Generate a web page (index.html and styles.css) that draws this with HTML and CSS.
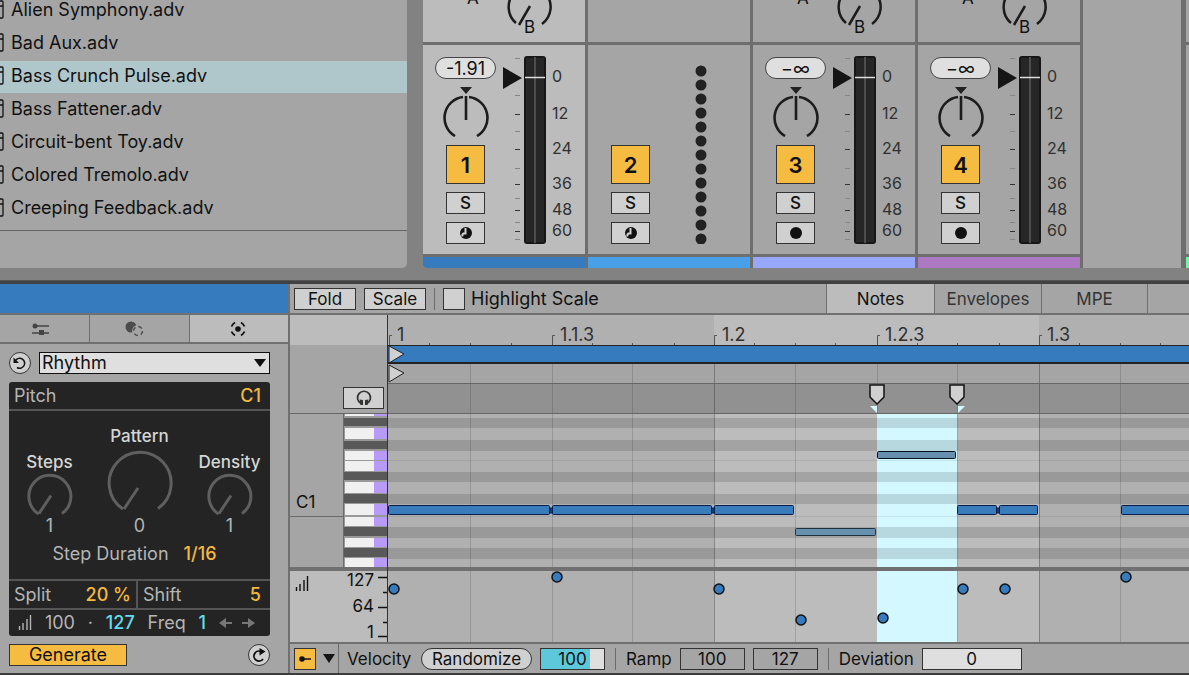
FILE: index.html
```html
<!DOCTYPE html>
<html lang="en">
<head>
  <meta charset="UTF-8" />
  <meta name="viewport" content="width=device-width, initial-scale=1.0"/>
  <title>Live Set</title>
  <link rel="stylesheet" href="styles.css">
</head>
<body>

  <!-- Shared shapes -->
  <svg class="defs" width="0" height="0" aria-hidden="true">
    <defs>
      <symbol id="device" viewBox="0 0 4 20">
        <path d="M0 1H2Q3 1 3 2V17Q3 18 2 18H0M0 6H3" fill="none" stroke="#111" stroke-width="1.300"/>
      </symbol>
      <g id="send">
        <path d="M93 23A21 21 0 1 1 119 24M107 6L96 25" fill="none" stroke="#1c1c1c" stroke-width="2.500"/>
        <text x="44" y="4">A</text>
        <text x="101" y="33">B</text>
      </g>
      <symbol id="pan" viewBox="0 0 50 50">
        <path d="M19 0H31L25 7Z" fill="#222"/>
        <path d="M14 49A21 21 0 0 1 22 10M28 10A21 21 0 0 1 36 49M25 9V33" fill="none" stroke="#1c1c1c" stroke-width="2.600"/>
      </symbol>
      <g id="meter">
        <path d="M0 11V33L19 22Z" fill="#151515"/>
        <path d="M12 2.500H17M12 39.500H17M12 75.500H17M12 112.500H17M12 142.500H17M12 166.500H17M12 183.500H17" stroke="#858585"/>
        <path d="M12 58.500H17M12 93.500H17M12 128.500H17M12 154.500H17M12 175.500H17" stroke="#333"/>
        <rect x="21" y="0" width="22" height="188" rx="3" fill="#161616"/>
        <path d="M23 2H31V186H23ZM33 2H41V186H33Z" fill="#262626"/>
        <path d="M32 1V187" stroke="#606060" stroke-width="1.500"/>
        <path d="M22 21.500H42" stroke="#ddd" stroke-width="1.500"/>
        <g class="scale">
          <text x="49" y="26">0</text>
          <text x="49" y="63">12</text>
          <text x="49" y="98">24</text>
          <text x="49" y="133">36</text>
          <text x="49" y="159">48</text>
          <text x="49" y="180">60</text>
        </g>
      </g>
      <symbol id="note-arm" viewBox="0 0 14 14">
        <circle cx="7" cy="7" r="6" fill="#111"/>
        <path d="M6.500 2V7.500H4.500Q3 8 3.500 10.500" fill="none" stroke="#d0d0d0" stroke-width="2"/>
      </symbol>
      <symbol id="bars" viewBox="0 0 14 16">
        <path d="M1.500 15V11M5 15V8M9 15V4M12.500 15V0" stroke="currentColor" stroke-width="1.400"/>
      </symbol>
      <g id="locator">
        <path d="M-7 0H7V12L0 19L-7 12Z" fill="#d0d0d0" stroke="#111" stroke-width="1.500"/>
      </g>
    </defs>
  </svg>

  <!-- Browser and mixer -->
  <div class="top">
    <div class="browser">
      <ul class="files">
        <li><svg width="4" height="20"><use href="#device"/></svg>Alien Symphony.adv</li>
        <li><svg width="4" height="20"><use href="#device"/></svg>Bad Aux.adv</li>
        <li class="selected"><svg width="4" height="20"><use href="#device"/></svg>Bass Crunch Pulse.adv</li>
        <li><svg width="4" height="20"><use href="#device"/></svg>Bass Fattener.adv</li>
        <li><svg width="4" height="20"><use href="#device"/></svg>Circuit-bent Toy.adv</li>
        <li><svg width="4" height="20"><use href="#device"/></svg>Colored Tremolo.adv</li>
        <li><svg width="4" height="20"><use href="#device"/></svg>Creeping Feedback.adv</li>
      </ul>
      <div class="browser-footer"></div>
    </div>

    <div class="mixer">
      <div class="track current">
        <svg class="sends" width="162" height="42"><use href="#send"/></svg>
        <div class="strip">
          <div class="controls">
            <input class="volume" type="text" value="-1.91" aria-label="Track 1 volume">
            <svg class="pan" width="50" height="50"><use href="#pan"/></svg>
            <button class="activator">1</button>
            <button class="small">S</button>
            <button class="small" aria-label="Arm track 1"><svg width="14" height="14"><use href="#note-arm"/></svg></button>
          </div>
          <svg width="80" height="188"><use href="#meter"/></svg>
        </div>
        <div class="color blue"></div>
      </div>

      <div class="track">
        <svg class="sends" width="162" height="42"></svg>
        <div class="strip">
          <div class="controls">
            <button class="activator">2</button>
            <button class="small">S</button>
            <button class="small" aria-label="Arm track 2"><svg width="14" height="14"><use href="#note-arm"/></svg></button>
          </div>
          <svg width="80" height="188">
            <path d="M33 15V184" stroke="#222" stroke-width="11" stroke-linecap="round" stroke-dasharray="0 14"/>
          </svg>
        </div>
        <div class="color sky"></div>
      </div>

      <div class="track">
        <svg class="sends" width="162" height="42"><use href="#send"/></svg>
        <div class="strip">
          <div class="controls">
            <input class="volume" type="text" value="−∞" aria-label="Track 3 volume">
            <svg class="pan" width="50" height="50"><use href="#pan"/></svg>
            <button class="activator">3</button>
            <button class="small">S</button>
            <button class="small" aria-label="Arm track 3"><svg width="14" height="14"><circle cx="7" cy="7" r="6" fill="#111"/></svg></button>
          </div>
          <svg width="80" height="188"><use href="#meter"/></svg>
        </div>
        <div class="color violet"></div>
      </div>

      <div class="track">
        <svg class="sends" width="162" height="42"><use href="#send"/></svg>
        <div class="strip">
          <div class="controls">
            <input class="volume" type="text" value="−∞" aria-label="Track 4 volume">
            <svg class="pan" width="50" height="50"><use href="#pan"/></svg>
            <button class="activator">4</button>
            <button class="small">S</button>
            <button class="small" aria-label="Arm track 4"><svg width="14" height="14"><circle cx="7" cy="7" r="6" fill="#111"/></svg></button>
          </div>
          <svg width="80" height="188"><use href="#meter"/></svg>
        </div>
        <div class="color purple"></div>
      </div>

      <div class="drop-area"></div>

      <div class="track return">
        <div class="sends"></div>
        <div class="strip"></div>
        <div class="color green"></div>
      </div>
    </div>
  </div>

  <!-- Clip view -->
  <div class="clip-view">
    <div class="clip-panel">
      <div class="clip-title"></div>
      <div class="clip-tabs">
        <button aria-label="Clip settings">
          <svg width="18" height="14">
            <path d="M3 4H18M1 11H18" stroke="#444" stroke-width="1.500"/>
            <circle cx="4" cy="4" r="2.500" fill="#444"/>
            <rect x="8" y="8" width="5" height="5" fill="#444"/>
          </svg>
        </button>
        <button aria-label="Transform">
          <svg width="20" height="18">
            <circle cx="7" cy="7" r="5.500" fill="#4c4c4c"/>
            <circle cx="14" cy="11" r="6" fill="#a5a5a5"/>
            <circle cx="14" cy="11" r="4.500" fill="none" stroke="#4c4c4c" stroke-width="1.500" stroke-dasharray="4 3"/>
          </svg>
        </button>
        <button class="active" aria-label="Generate">
          <svg width="16" height="16">
            <circle cx="8" cy="8" r="2.800" fill="#111"/>
            <path d="M1.500 5.500Q2.500 3 5 1.500M11 1.500Q13.500 3 14.500 5.500M14.500 10.500Q13.500 13 11 14.500M5 14.500Q2.500 13 1.500 10.500" fill="none" stroke="#111" stroke-width="1.800"/>
          </svg>
        </button>
      </div>

      <div class="tools">
        <div class="row">
          <button class="round" aria-label="Reset">
            <svg width="16" height="16">
              <path d="M3.500 5.500A5 5 0 1 1 5 12.500" fill="none" stroke="#111" stroke-width="1.500"/>
              <path d="M1.500 2.500V8H7Z" fill="#111"/>
            </svg>
          </button>
          <div class="picker">
            <select aria-label="Generator"><option>Rhythm</option></select>
          </div>
        </div>

        <div class="display">
          <div class="line"><span>Pitch</span><b>C1</b></div>
          <div class="pattern">
            <div class="knobs">
              <div class="knob">
                <span>Steps</span>
                <svg width="48" height="46"><path d="M12.500 42A21 21 0 1 1 36 41.500M25 23.500L13 41.500"/></svg>
                <i>1</i>
              </div>
              <div class="knob">
                <span>Pattern</span>
                <svg width="66" height="72"><path d="M16 63A31 31 0 1 1 51 62.500M31 42L17 63"/></svg>
                <i>0</i>
              </div>
              <div class="knob">
                <span>Density</span>
                <svg width="48" height="46"><path d="M12.500 42A21 21 0 1 1 36 41.500M25 23.500L13 41.500"/></svg>
                <i>1</i>
              </div>
            </div>
            <div class="duration"><span>Step Duration</span><b>1/16</b></div>
          </div>
          <div class="split">
            <div class="line"><span>Split</span><b>20 %</b></div>
            <div class="line"><span>Shift</span><b>5</b></div>
          </div>
          <div class="accent">
            <svg width="14" height="16"><use href="#bars"/></svg>
            <span>100</span>
            <span class="dot">·</span>
            <b>127</b>
            <span>Freq</span>
            <b>1</b>
            <svg width="36" height="12">
              <path d="M13 6H3M23 6H33" stroke="#777" stroke-width="2"/>
              <path d="M0 6L7 1V11ZM36 6L29 1V11Z" fill="#777"/>
            </svg>
          </div>
        </div>

        <div class="row spread">
          <button class="generate">Generate</button>
          <button class="round" aria-label="Auto generate">
            <svg width="16" height="16">
              <path d="M12 12A5 5 0 1 1 10 4.500" fill="none" stroke="#111" stroke-width="1.800"/>
              <path d="M8.500 1L14.500 4.500L8.500 8.500Z" fill="#111"/>
            </svg>
          </button>
        </div>
      </div>
    </div>

    <div class="editor">
      <div class="toolbar">
        <button>Fold</button>
        <button>Scale</button>
        <span class="sep"></span>
        <label><input type="checkbox">Highlight Scale</label>
        <div class="editor-tabs">
          <button class="active">Notes</button>
          <button>Envelopes</button>
          <button>MPE</button>
          <span></span>
        </div>
      </div>

      <div class="roll">
        <div class="gutter">
          <div class="gutter-ruler"></div>
          <div class="gutter-scrub">
            <button aria-label="Preview">
              <svg width="16" height="16">
                <path d="M5 13.500A6.500 6.500 0 1 1 11 13.500" fill="none" stroke="#333" stroke-width="1.700"/>
                <path d="M3.500 9.500L7 10V15H4.500ZM12.500 9.500L9 10V15H11.500Z" fill="#333"/>
              </svg>
            </button>
          </div>
          <div class="gutter-keys">
            <svg width="98" height="153">
              <rect x="53" width="45" height="153" fill="#999"/>
              <path d="M55 0H84V2H55ZM55 14H84V25H55ZM55 37H84V46H55ZM55 47H84V57H55ZM55 68H84V79H55ZM55 90H84V101H55ZM55 103H84V112H55ZM55 124H84V133H55ZM55 144H84V153H55Z" fill="#f0f0f0"/>
              <path d="M84 0H98V2H84ZM84 14H98V25H84ZM84 37H98V46H84ZM84 47H98V57H84ZM84 68H98V79H84ZM84 90H98V101H84ZM84 103H98V112H84ZM84 124H98V133H84ZM84 144H98V153H84Z" fill="#b89bf8"/>
              <path d="M54 4H98V12H54ZM54 27H98V35H54ZM54 58H98V66H54ZM54 80H98V89H54ZM54 113H98V122H54ZM54 134H98V143H54Z" fill="#595959"/>
              <path d="M53.500 0V153M0 102.500H53" stroke="#6b6b6b"/>
              <text x="6" y="94">C1</text>
            </svg>
          </div>
          <div class="gutter-velocity">
            <svg width="98" height="71">
              <svg x="5" y="5" width="14" height="16"><use href="#bars"/></svg>
              <path d="M88 6.500H98M88 36.500H98M88 65.500H98M93 21.500H98M93 51.500H98" stroke="#111" stroke-width="1.500"/>
              <g text-anchor="end">
                <text x="84" y="15">127</text>
                <text x="84" y="41">64</text>
                <text x="84" y="67">1</text>
              </g>
            </svg>
          </div>
        </div>

        <!-- Note canvas: ruler, loop brace, markers, notes, velocities -->
        <svg class="canvas" height="327">
          <rect width="100%" height="327" fill="#b0b0b0"/>
          <rect x="326" width="325" height="327" fill="#bcbcbc"/>
          <rect y="30" width="100%" height="38" fill="#a5a5a5"/>
          <rect y="69" width="100%" height="30" fill="#919191"/>

          <rect x="489" y="99" width="80" height="228" fill="#d3f8ff"/>
          <path d="M482 91H489V98ZM570 91H577L570 98Z" fill="#d3f8ff"/>
          <g fill="#000" fill-opacity=".13">
            <rect y="103" width="100%" height="10"/>
            <rect y="125" width="100%" height="11"/>
            <rect y="157" width="100%" height="10"/>
            <rect y="179" width="100%" height="10"/>
            <rect y="212" width="100%" height="11"/>
            <rect y="233" width="100%" height="11"/>
          </g>
          <path d="M82.500 49V327M164.500 49V327M244.500 49V327M407.500 49V327M489.500 49V99M569.500 49V327M732.500 49V327" stroke="#000" stroke-opacity=".14"/>
          <path d="M326.500 49V327M651.500 49V327" stroke="#000" stroke-opacity=".28"/>
          <rect y="145" width="100%" height="1" fill="#000" fill-opacity=".08"/>
          <rect y="201" width="100%" height="1" fill="#000" fill-opacity=".08"/>

          <rect y="30" width="100%" height="19" fill="#222"/>
          <rect y="31" width="100%" height="16" fill="#367bbd"/>
          <rect y="68" width="100%" height="1" fill="#666"/>
          <rect y="98" width="100%" height="1" fill="#666"/>
          <rect y="252" width="100%" height="4" fill="#707070"/>

          <path d="M1.500 30V20.500H4M164.500 30V20.500H167M326.500 30V20.500H329M489.500 30V20.500H492M651.500 30V20.500H654M41.500 28V30M82.500 28V30M123.500 28V30M204.500 28V30M244.500 28V30M286.500 28V30M366.500 28V30M407.500 28V30M447.500 28V30M529.500 28V30M569.500 28V30M611.500 28V30M691.500 28V30M732.500 28V30M772.500 28V30" fill="none" stroke="#555"/>
          <g class="scale ruler">
            <text x="9" y="26">1</text>
            <text x="172" y="26">1.1.3</text>
            <text x="334" y="26">1.2</text>
            <text x="497" y="26">1.2.3</text>
            <text x="659" y="26">1.3</text>
          </g>

          <path d="M1 31L16 39L1 48ZM1 50L16 58L1 67Z" fill="#d0d0d0" stroke="#222"/>
          <use href="#locator" x="489" y="70"/>
          <use href="#locator" x="569" y="70"/>

          <g fill="#397cbb" stroke="#0a1c4c">
            <path d="M161 193H165V198H161ZM323 193H327V198H323ZM608 193H612V198H608Z" fill="#123e70"/>
            <rect x="0.500" y="190.500" width="161" height="9" rx="1"/>
            <rect x="164.500" y="190.500" width="159" height="9" rx="1"/>
            <rect x="326.500" y="190.500" width="79" height="9" rx="1"/>
            <rect x="569.500" y="190.500" width="39" height="9" rx="1"/>
            <rect x="611.500" y="190.500" width="38" height="9" rx="1"/>
            <rect x="733.500" y="190.500" width="162" height="9" rx="1"/>
          </g>
          <g fill="#6690ad" stroke="#1d333f">
            <rect x="407.500" y="213.500" width="80" height="7" rx="1"/>
            <rect x="489.500" y="136.500" width="78" height="7" rx="1" stroke="#05111c"/>
          </g>
          <g fill="#367bbd" stroke="#111" stroke-width="1.500">
            <circle cx="6" cy="274" r="5"/>
            <circle cx="169" cy="262" r="5"/>
            <circle cx="331" cy="274" r="5"/>
            <circle cx="413" cy="305" r="5"/>
            <circle cx="495" cy="303" r="5"/>
            <circle cx="575" cy="274" r="5"/>
            <circle cx="617" cy="274" r="5"/>
            <circle cx="738" cy="262" r="5"/>
          </g>
        </svg>
      </div>

      <div class="velocity-bar">
        <button class="lane" aria-label="Velocity lane"><svg width="14" height="8"><path d="M4 4H13" stroke="#111" stroke-width="1.500"/><circle cx="4" cy="4" r="2.800" fill="#111"/></svg></button>
        <button class="menu" aria-label="Lane menu"><svg width="12" height="9"><path d="M0 0H12L6 9Z" fill="#151515"/></svg></button>
        <span class="velocity">Velocity</span>
        <button class="randomize">Randomize</button>
        <input class="amount" type="text" value="100" aria-label="Randomize amount">
        <span class="sep"></span>
        <label for="ramp-start">Ramp</label>
        <input id="ramp-start" type="text" value="100">
        <input type="text" value="127" aria-label="Ramp end">
        <span class="sep"></span>
        <label for="deviation">Deviation</label>
        <input id="deviation" type="text" value="0">
      </div>
    </div>
  </div>

</body>
</html>
```

FILE: styles.css
```css
* { box-sizing: border-box; }

body {
  margin: 0;
  min-height: 100vh;
  display: flex;
  flex-direction: column;
  overflow: hidden;
  background-color: #828282;
  color: #111;
  font-family: Inter, "Liberation Sans", sans-serif;
  font-size: 17px;
  line-height: 20px;
}

button, input, select {
  font: inherit;
  color: inherit;
  margin: 0;
  padding: 0;
  border: 1px solid #333;
  border-radius: 0;
  background-color: #d0d0d0;
}

input[type="text"] {
  min-width: 0;
  text-align: center;
}

button {
  display: flex;
  align-items: center;
  justify-content: center;
}

svg {
  display: block;
  flex: none;
}

svg text {
  fill: #111;
}

.scale text {
  fill: #303030;
  font-size: 16px;
}

.ruler text {
  font-size: 18px;
}

.sends text {
  font-size: 16px;
}

.defs {
  position: absolute;
}

/* Top */
.top {
  display: flex;
  gap: 16px;
  padding-bottom: 12px;
  border-bottom: 1px solid #555;
}

.browser {
  width: 407px;
  overflow: hidden;
  background-color: #a5a5a5;
  border-bottom-right-radius: 5px;
}

.files {
  list-style: none;
  margin: -5px 0 0;
  padding: 0;
  font-size: 18px;
}

.files li {
  display: flex;
  align-items: center;
  gap: 7px;
  height: 33px;
  padding-bottom: 2px;
  border-bottom: 1px solid transparent;
  background-clip: padding-box;
}

.files .selected {
  background-color: #afc6cb;
}

.browser-footer {
  height: 38px;
  margin-top: 4px;
  border-top: 1px solid #666;
}

.mixer {
  flex: 1;
  display: flex;
  gap: 3px;
  overflow: hidden;
  background-color: #6e6e6e;
  border-bottom-left-radius: 5px;
}

.track {
  flex: none;
  width: 162px;
  display: flex;
  flex-direction: column;
  gap: 3px;
}

.sends {
  height: 42px;
  background-color: #a5a5a5;
}

.strip {
  height: 209px;
  display: flex;
  gap: 7px;
  padding: 11px 0 10px 12px;
  background-color: #a5a5a5;
}

.current .sends, .current .strip {
  background-color: #bcbcbc;
}

.controls {
  width: 61px;
  display: flex;
  flex-direction: column;
  align-items: center;
  justify-content: flex-end;
  gap: 8px;
}

.volume {
  width: 61px;
  height: 22px;
  border: 1px solid #444;
  border-radius: 11px;
  background-color: #dfdfdf;
  font-size: 18px;
}

.activator {
  width: 39px;
  height: 39px;
  background-color: #f5bc41;
  font-size: 22px;
  font-weight: 600;
}

.small {
  width: 39px;
  height: 22px;
  font-weight: 500;
}

.color { height: 11px; }
.blue { background-color: #367bbd; }
.sky { background-color: #4aa0e8; }
.violet { background-color: #97a7fa; }
.purple { background-color: #ad78c2; }
.green { background-color: #6ff7a0; }

.drop-area {
  flex: none;
  width: 98px;
  background-color: #a5a5a5;
}

.return {
  flex: 1;
  min-width: 0;
  margin-left: 2px;
}

.return .strip {
  padding: 0;
}

/* Clip view */
.clip-view {
  flex: 1;
  display: flex;
  gap: 2px;
  border-top: 3px solid #414141;
  border-bottom: 2px solid #3c3c3c;
  background-color: #707070;
}

.clip-panel {
  width: 288px;
  flex: none;
  background-color: #a5a5a5;
}

.clip-title {
  height: 29px;
  background-color: #367bbd;
}

.clip-tabs {
  display: grid;
  grid-template-columns: 89px 1fr 1fr;
  gap: 1px;
  height: 31px;
  padding: 2px 0;
  background-color: #707070;
}

.clip-tabs button {
  border: none;
  background-color: #a5a5a5;
  padding-right: 10px;
}

.clip-tabs .active {
  background-color: #bcbcbc;
  padding-right: 2px;
}

.tools {
  padding: 8px 18px 7px 9px;
  display: flex;
  flex-direction: column;
  gap: 8px;
}

.row {
  display: flex;
  gap: 8px;
}

.spread {
  justify-content: space-between;
}

.round {
  width: 22px;
  height: 22px;
  border-radius: 50%;
}

.picker {
  flex: 1;
  position: relative;
}

.picker::after {
  content: "";
  position: absolute;
  right: 4px;
  top: 7px;
  border: 6px solid transparent;
  border-top: 8px solid #111;
  border-bottom: none;
  pointer-events: none;
}

select {
  display: block;
  width: 100%;
  height: 22px;
  padding-left: 2px;
  appearance: none;
  border: 1px solid #111;
  background-color: #dfdfdf;
  font-size: 18px;
}

.display {
  overflow: hidden;
  border-radius: 3px;
  background-color: #242424;
  color: #b5b5b5;
  font-size: 18px;
}

.display b {
  font-weight: 500;
  color: #f5b83f;
}

.line {
  display: flex;
  justify-content: space-between;
  align-items: center;
  height: 27px;
  padding: 0 9px 0 5px;
}

.pattern {
  height: 172px;
  padding-top: 15px;
  border-top: 2px solid #555;
  border-bottom: 2px solid #555;
}

.knobs {
  display: grid;
  grid-template-columns: 90px 90px 90px;
  justify-content: center;
  align-items: end;
}

.knob {
  display: flex;
  flex-direction: column;
  align-items: center;
}

.knob span {
  color: #d5d5d5;
  font-size: 17px;
  font-weight: 500;
}

.knob i {
  font-style: normal;
  line-height: 16px;
}

.knob path {
  fill: none;
  stroke: #5f5f5f;
  stroke-width: 3;
}

.duration {
  display: flex;
  justify-content: center;
  gap: 15px;
  margin-top: 10px;
  padding-right: 10px;
}

.split {
  display: grid;
  grid-template-columns: 127px 1fr;
  gap: 2px;
  background-color: #555;
  border-bottom: 2px solid #555;
}

.split .line {
  background-color: #242424;
  padding-right: 5px;
}

.split .line + .line {
  padding-right: 9px;
}

.accent {
  display: flex;
  align-items: center;
  height: 26px;
  padding: 0 15px 0 9px;
  justify-content: space-between;
}

.accent b {
  color: #62dcec;
}

.generate {
  width: 118px;
  height: 22px;
  background-color: #f5bc41;
  font-size: 18px;
}

/* Editor */
.editor {
  flex: 1;
  min-width: 0;
  display: flex;
  flex-direction: column;
  background-color: #a5a5a5;
}

.toolbar {
  display: flex;
  align-items: center;
  gap: 8px;
  height: 31px;
  padding-left: 4px;
  border-bottom: 2px solid #707070;
}

.toolbar > button {
  width: 62px;
  height: 22px;
}

.sep {
  width: 1px;
  height: 22px;
  background-color: #6b6b6b;
}

.toolbar label {
  display: flex;
  align-items: center;
  gap: 6px;
  font-size: 18px;
}

input[type="checkbox"] {
  appearance: none;
  width: 22px;
  height: 22px;
}

.editor-tabs {
  display: grid;
  grid-template-columns: 107px 106px 105px 41px;
  gap: 1px;
  height: 29px;
  margin-left: auto;
  padding-left: 1px;
  background-color: #707070;
}

.editor-tabs button, .editor-tabs span {
  border: none;
  background-color: #a5a5a5;
  color: #333;
}

.editor-tabs .active {
  background-color: #bcbcbc;
  color: #111;
}

.roll {
  display: flex;
}

.gutter {
  width: 98px;
  flex: none;
  overflow: hidden;
  border-right: 1px solid #333;
}

.gutter-ruler {
  height: 30px;
  background-color: #bcbcbc;
}

.gutter-scrub {
  height: 69px;
  padding: 42px 3px 0 53px;
  border-bottom: 1px solid #666;
}

.gutter-scrub button {
  width: 41px;
  height: 22px;
}

.gutter-velocity {
  border-top: 4px solid #707070;
  background-color: #bcbcbc;
}

.canvas {
  flex: 1;
  min-width: 0;
}

.velocity-bar {
  flex: 1;
  display: flex;
  align-items: center;
  gap: 8px;
  padding-left: 4px;
  border-top: 2px solid #707070;
}

.velocity-bar input {
  width: 65px;
  height: 22px;
  background-color: #a5a5a5;
}

.velocity-bar .amount {
  background: linear-gradient(to right, #5cc8d9 78%, #dfdfdf 78%);
}

.velocity-bar #deviation {
  width: 100px;
  background-color: #dfdfdf;
}

.velocity-bar .lane {
  width: 22px;
  height: 22px;
  background-color: #f5bc41;
}

.velocity-bar .menu {
  align-self: stretch;
  width: 19px;
  margin-left: -4px;
  border: none;
  border-right: 1px solid #6b6b6b;
  background: none;
}

.velocity-bar .sep {
  margin: 0 2px;
}

.velocity {
  width: 66px;
}

.randomize {
  width: 111px;
  height: 22px;
  border-radius: 11px;
}
```
